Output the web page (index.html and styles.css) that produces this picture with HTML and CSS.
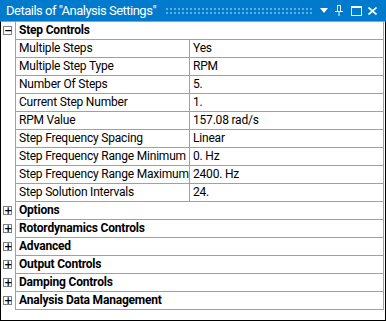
FILE: index.html
```html
<!DOCTYPE html>
<html lang="en">
<head>
  <meta charset="UTF-8">
  <title>Details of "Analysis Settings"</title>
  <link rel="stylesheet" href="styles.css">
</head>
<body>
  <div class="panel">
    <div class="titlebar">
      <span class="title">Details of "Analysis Settings"</span>
      <span class="grip"></span>
      <svg class="tb-icon drop" width="8" height="5" viewBox="0 0 8 5"><path d="M0 0H8L4 5Z" fill="#fff"/></svg>
      <svg class="tb-icon pin" width="8" height="11" viewBox="0 0 8 11"><path d="M2 0.5H6M2.5 0.5V6.5M5.5 0.5V6.5M0 6.5H8M4 6.5V11" stroke="#fff" stroke-width="1" fill="none"/><rect x="5" y="1" width="1" height="5" fill="#fff"/></svg>
      <svg class="tb-icon max" width="11" height="10" viewBox="0 0 11 10"><rect x="0.5" y="0.5" width="10" height="9" stroke="#fff" fill="none"/><rect x="0" y="0" width="11" height="2" fill="#fff"/></svg>
      <svg class="tb-icon close" width="9" height="8" viewBox="0 0 9 8"><path d="M0.5 0.5L8.5 7.5M8.5 0.5L0.5 7.5" stroke="#fff" stroke-width="1.6"/></svg>
    </div>

    <div class="body">
      <div class="row group">
        <div class="exp"><span class="box">&minus;</span></div>
        <div class="cells"><div class="cat">Step Controls</div></div>
      </div>
      <div class="row">
        <div class="exp"></div>
        <div class="cells"><div class="name">Multiple Steps</div><div class="value">Yes</div></div>
      </div>
      <div class="row">
        <div class="exp"></div>
        <div class="cells"><div class="name">Multiple Step Type</div><div class="value">RPM</div></div>
      </div>
      <div class="row">
        <div class="exp"></div>
        <div class="cells"><div class="name">Number Of Steps</div><div class="value">5.</div></div>
      </div>
      <div class="row">
        <div class="exp"></div>
        <div class="cells"><div class="name">Current Step Number</div><div class="value">1.</div></div>
      </div>
      <div class="row">
        <div class="exp"></div>
        <div class="cells"><div class="name">RPM Value</div><div class="value">157.08 rad/s</div></div>
      </div>
      <div class="row">
        <div class="exp"></div>
        <div class="cells"><div class="name">Step Frequency Spacing</div><div class="value">Linear</div></div>
      </div>
      <div class="row">
        <div class="exp"></div>
        <div class="cells"><div class="name">Step Frequency Range Minimum</div><div class="value">0. Hz</div></div>
      </div>
      <div class="row">
        <div class="exp"></div>
        <div class="cells"><div class="name">Step Frequency Range Maximum</div><div class="value">2400. Hz</div></div>
      </div>
      <div class="row">
        <div class="exp"></div>
        <div class="cells"><div class="name">Step Solution Intervals</div><div class="value">24.</div></div>
      </div>
      <div class="row group">
        <div class="exp"><span class="box">+</span></div>
        <div class="cells"><div class="cat">Options</div></div>
      </div>
      <div class="row group">
        <div class="exp"><span class="box">+</span></div>
        <div class="cells"><div class="cat">Rotordynamics Controls</div></div>
      </div>
      <div class="row group">
        <div class="exp"><span class="box">+</span></div>
        <div class="cells"><div class="cat">Advanced</div></div>
      </div>
      <div class="row group">
        <div class="exp"><span class="box">+</span></div>
        <div class="cells"><div class="cat">Output Controls</div></div>
      </div>
      <div class="row group">
        <div class="exp"><span class="box">+</span></div>
        <div class="cells"><div class="cat">Damping Controls</div></div>
      </div>
      <div class="row group">
        <div class="exp"><span class="box">+</span></div>
        <div class="cells"><div class="cat">Analysis Data Management</div></div>
      </div>
    </div>
  </div>
</body>
</html>
```

FILE: styles.css
```css
* {
  margin: 0;
  padding: 0;
  box-sizing: border-box;
}

body {
  font-family: Roboto, 'Noto Sans', sans-serif;
  background: #fff;
  color: #000;
  width: 386px;
  height: 321px;
  overflow: hidden;
}

.panel {
  width: 386px;
  height: 321px;
  display: flex;
  flex-direction: column;
}

/* title bar */
.titlebar {
  height: 21px;
  background: #007acc;
  color: #fff;
  display: flex;
  align-items: center;
  padding-left: 6px;
  flex-shrink: 0;
}

.title {
  font-size: 13px;
  letter-spacing: -0.5px;
  line-height: 20px;
  white-space: nowrap;
}

.grip {
  flex: 1;
  height: 7px;
  margin: 0 6px 0 9px;
  background-image: radial-gradient(circle, #5fb0e8 0.8px, transparent 1px);
  background-size: 4px 4px;
}

.tb-icon {
  display: block;
  flex-shrink: 0;
}

.drop { margin-right: 7px; }
.pin { margin-right: 8px; }
.max { margin-right: 6px; }
.close { margin-right: 9px; }

/* property grid */
.body {
  flex: 1;
  border: 1px solid #000;
  border-top: 1px solid #a0a0a0;
  padding-right: 1px;
  font-size: 12px;
}

.row {
  display: flex;
  height: 18px;
}

.exp {
  width: 14px;
  flex-shrink: 0;
  position: relative;
}

.box {
  position: absolute;
  left: 2px;
  top: 4px;
  width: 9px;
  height: 9px;
  border: 1px solid #808080;
  font-size: 10px;
  line-height: 7px;
  text-align: center;
  font-family: 'DejaVu Sans', sans-serif;
  font-weight: bold;
}

.cells {
  flex: 1;
  display: flex;
  border-left: 1px solid #a0a0a0;
  border-right: 1px solid #a0a0a0;
  border-bottom: 1px solid #a0a0a0;
  line-height: 17px;
  white-space: nowrap;
  letter-spacing: -0.2px;
}

.name {
  width: 174px;
  padding-left: 3px;
  border-right: 1px solid #a0a0a0;
  overflow: hidden;
}

.value {
  flex: 1;
  padding-left: 3px;
}

.cat {
  padding-left: 3px;
  font-weight: bold;
}
```
